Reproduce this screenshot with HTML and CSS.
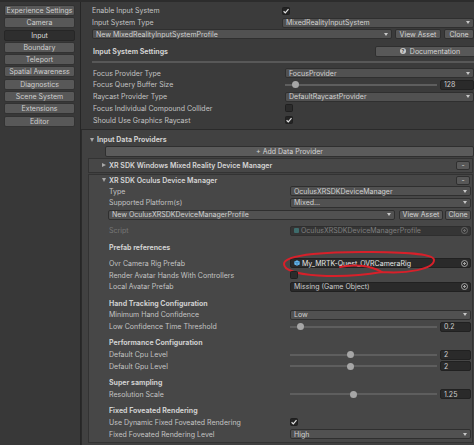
FILE: index.html
```html
<!DOCTYPE html>
<html>
    <head>
        <title>Mixed Reality Toolkit - Input</title>
        <link rel="stylesheet" href="styles.css">
    </head>
    <body>
        <div class="window">
            <div class="sidebar">
                <div class="nav-btn">Experience Settings</div>
                <div class="nav-btn">Camera</div>
                <div class="nav-btn active">Input</div>
                <div class="nav-btn">Boundary</div>
                <div class="nav-btn">Teleport</div>
                <div class="nav-btn">Spatial Awareness</div>
                <div class="nav-btn">Diagnostics</div>
                <div class="nav-btn">Scene System</div>
                <div class="nav-btn">Extensions</div>
                <div class="nav-btn">Editor</div>
            </div>

            <div class="inspector">
                <div class="row top">
                    <span class="label">Enable Input System</span>
                    <span class="value"><span class="check on"><svg viewBox="0 0 8 8"><path d="M1.6 4.3 L3.3 5.9 L6.5 2.1" /></svg></span></span>
                </div>
                <div class="row top">
                    <span class="label">Input System Type</span>
                    <span class="value"><span class="popup">MixedRealityInputSystem</span></span>
                </div>
                <div class="row top">
                    <span class="popup profile">New MixedRealityInputSystemProfile</span>
                    <span class="btn view">View Asset</span>
                    <span class="btn clone">Clone</span>
                </div>
                <div class="row top heading">
                    <span class="label bold">Input System Settings</span>
                    <span class="btn doc"><span class="help">?</span>Documentation</span>
                </div>
                <div class="rule"></div>

                <div class="row settings first">
                    <span class="label">Focus Provider Type</span>
                    <span class="value"><span class="popup">FocusProvider</span></span>
                </div>
                <div class="row settings">
                    <span class="label">Focus Query Buffer Size</span>
                    <span class="value">
                        <span class="slider"><span class="knob" style="left: 7%"></span></span>
                        <span class="field num wide">128</span>
                    </span>
                </div>
                <div class="row settings">
                    <span class="label">Raycast Provider Type</span>
                    <span class="value"><span class="popup">DefaultRaycastProvider</span></span>
                </div>
                <div class="row settings">
                    <span class="label">Focus Individual Compound Collider</span>
                    <span class="value"><span class="check"></span></span>
                </div>
                <div class="row settings">
                    <span class="label">Should Use Graphics Raycast</span>
                    <span class="value"><span class="check on"><svg viewBox="0 0 8 8"><path d="M1.6 4.3 L3.3 5.9 L6.5 2.1" /></svg></span></span>
                </div>

                <div class="providers">
                    <div class="fold-head bold"><span class="tri down"></span>Input Data Providers</div>
                    <div class="btn add">+ Add Data Provider</div>

                    <div class="box">
                        <div class="box-head"><span class="tri right"></span>XR SDK Windows Mixed Reality Device Manager<span class="btn minus">-</span></div>
                    </div>

                    <div class="box open">
                        <div class="box-head"><span class="tri down"></span>XR SDK Oculus Device Manager<span class="btn minus">-</span></div>

                        <div class="row inner">
                            <span class="label">Type</span>
                            <span class="value"><span class="popup">OculusXRSDKDeviceManager</span></span>
                        </div>
                        <div class="row inner">
                            <span class="label">Supported Platform(s)</span>
                            <span class="value"><span class="popup">Mixed...</span></span>
                        </div>
                        <div class="row inner">
                            <span class="popup profile">New OculusXRSDKDeviceManagerProfile</span>
                            <span class="btn view">View Asset</span>
                            <span class="btn clone">Clone</span>
                        </div>
                        <div class="row inner spaced dim">
                            <span class="label">Script</span>
                            <span class="value"><span class="field object disabled"><span class="script-icon"></span>OculusXRSDKDeviceManagerProfile<span class="picker"></span></span></span>
                        </div>

                        <div class="row inner spaced">
                            <span class="label bold">Prefab references</span>
                        </div>
                        <div class="row inner spaced">
                            <span class="label">Ovr Camera Rig Prefab</span>
                            <span class="value marked">
                                <span class="field object bright">
                                    <svg class="prefab" viewBox="0 0 6 6"><path d="M3 0.3 L5.7 1.6 V4.4 L3 5.7 L0.3 4.4 V1.6Z" fill="#67b8ee" /><path d="M0.3 1.6 L3 2.9 L5.7 1.6 M3 2.9 V5.7" stroke="#2b6d9e" stroke-width="0.6" fill="none" /></svg>My_MRTK-Quest_OVRCameraRig<span class="picker"></span>
                                </span>
                                <svg class="circled" viewBox="0 0 154 27">
                                    <path d="M58 16 C70 13 88 14 100 21" />
                                    <path d="M100 21 C60 28 2 26 2 13 C2 3 50 0.5 90 1 C130 1.5 152 3 152 9 C152 18 125 23 100 21" />
                                </svg>
                            </span>
                        </div>
                        <div class="row inner">
                            <span class="label">Render Avatar Hands With Controllers</span>
                            <span class="value"><span class="check"></span></span>
                        </div>
                        <div class="row inner">
                            <span class="label">Local Avatar Prefab</span>
                            <span class="value"><span class="field object">Missing (Game Object)<span class="picker"></span></span></span>
                        </div>

                        <div class="row inner spaced">
                            <span class="label bold">Hand Tracking Configuration</span>
                        </div>
                        <div class="row inner">
                            <span class="label">Minimum Hand Confidence</span>
                            <span class="value"><span class="popup">Low</span></span>
                        </div>
                        <div class="row inner">
                            <span class="label">Low Confidence Time Threshold</span>
                            <span class="value">
                                <span class="slider"><span class="knob" style="left: 7%"></span></span>
                                <span class="field num">0.2</span>
                            </span>
                        </div>

                        <div class="row inner spaced">
                            <span class="label bold">Performance Configuration</span>
                        </div>
                        <div class="row inner">
                            <span class="label">Default Cpu Level</span>
                            <span class="value">
                                <span class="slider"><span class="knob" style="left: 41%"></span></span>
                                <span class="field num">2</span>
                            </span>
                        </div>
                        <div class="row inner">
                            <span class="label">Default Gpu Level</span>
                            <span class="value">
                                <span class="slider"><span class="knob" style="left: 41%"></span></span>
                                <span class="field num">2</span>
                            </span>
                        </div>

                        <div class="row inner spaced">
                            <span class="label bold">Super sampling</span>
                        </div>
                        <div class="row inner">
                            <span class="label">Resolution Scale</span>
                            <span class="value">
                                <span class="slider"><span class="knob" style="left: 43%"></span></span>
                                <span class="field num">1.25</span>
                            </span>
                        </div>

                        <div class="row inner spaced">
                            <span class="label bold">Fixed Foveated Rendering</span>
                        </div>
                        <div class="row inner">
                            <span class="label">Use Dynamic Fixed Foveated Rendering</span>
                            <span class="value"><span class="check on"><svg viewBox="0 0 8 8"><path d="M1.6 4.3 L3.3 5.9 L6.5 2.1" /></svg></span></span>
                        </div>
                        <div class="row inner">
                            <span class="label">Fixed Foveated Rendering Level</span>
                            <span class="value"><span class="popup">High</span></span>
                        </div>
                    </div>
                </div>
            </div>
        </div>
    </body>
</html>
```

FILE: styles.css
```css
body {
    margin: 0px;
    background: #383838;
    font-family: Inter, "Liberation Sans", sans-serif;
    font-size: 7px;
    color: #c4c4c4;
}
.window {
    display: flex;
    width: 474px;
    height: 445px;
    overflow: hidden;
    border-top: 2px solid #2c2c2c;
    box-sizing: border-box;
}
.bold {
    font-weight: bold;
    color: #d0d0d0;
}

/* left tab list */
.sidebar {
    width: 76px;
    padding: 3px 0 0 4px;
    border-right: 1px solid #262626;
    display: flex;
    flex-direction: column;
    gap: 1.3px;
    flex: none;
}
.nav-btn {
    width: 71px;
    height: 11px;
    line-height: 10px;
    box-sizing: border-box;
    background: #585858;
    border: 1px solid #323232;
    border-radius: 2px;
    text-align: center;
    color: #cfcfcf;
    white-space: nowrap;
}
.nav-btn.active {
    background: #2e2e2e;
    border-color: #262626;
    color: #dcdcdc;
}

/* inspector */
.inspector {
    flex: 1;
    min-width: 0;
    display: flex;
    flex-direction: column;
    padding-top: 3px;
    background: #3b3b3b;
}
.row {
    display: flex;
    align-items: center;
    height: 11.75px;
    flex: none;
    white-space: nowrap;
}
.label {
    flex: none;
    overflow: hidden;
}
.value {
    flex: 1;
    min-width: 0;
    display: flex;
    align-items: center;
    position: relative;
}
.row.top {
    padding-left: 11px;
}
.row.top .label {
    width: 190px;
}
.row.heading {
    margin-top: 5px;
    height: 12px;
    padding-left: 12px;
}
.row.heading .label {
    width: 282px;
}
.rule {
    height: 2px;
    background: #585858;
    margin: 4px 0 0 11px;
    flex: none;
}
.row.settings {
    padding-left: 12px;
}
.row.settings .label {
    width: 192px;
}
.row.settings.first {
    margin-top: 4px;
}

/* controls */
.popup {
    flex: 1;
    min-width: 0;
    height: 10px;
    box-sizing: border-box;
    background: #515151;
    border: 1px solid #2f2f2f;
    border-radius: 2px;
    padding-left: 3px;
    display: flex;
    align-items: center;
    color: #d2d2d2;
}
.popup::after {
    content: "";
    margin-left: auto;
    margin-right: 3px;
    border-left: 2.5px solid transparent;
    border-right: 2.5px solid transparent;
    border-top: 3px solid #c8c8c8;
}
.btn {
    height: 10px;
    box-sizing: border-box;
    background: #585858;
    border: 1px solid #2f2f2f;
    border-radius: 2px;
    display: flex;
    align-items: center;
    justify-content: center;
    color: #d4d4d4;
    flex: none;
}
.row.top .view {
    width: 46px;
    margin-left: 3px;
}
.row.top .clone {
    width: 30px;
    margin-left: 3px;
}
.doc {
    width: 110px;
    height: 11px;
}
.help {
    width: 6px;
    height: 6px;
    line-height: 6px;
    border-radius: 50%;
    background: #c8c8c8;
    color: #3a3a3a;
    font-size: 5px;
    font-weight: bold;
    text-align: center;
    margin-right: 4px;
}
.field {
    height: 10px;
    box-sizing: border-box;
    background: #2a2a2a;
    border: 1px solid #212121;
    border-radius: 2px;
    padding-left: 3px;
    display: flex;
    align-items: center;
    color: #cdcdcd;
}
.field.object {
    flex: 1;
    min-width: 0;
}
.field.bright {
    color: #e6e6e6;
}
.field.disabled {
    background: #353535;
    border-color: #2e2e2e;
    color: #7e7e7e;
}
.picker {
    width: 7px;
    height: 7px;
    box-sizing: border-box;
    margin-left: auto;
    margin-right: 2px;
    border: 1px solid #a2a2a2;
    border-radius: 50%;
    background: radial-gradient(circle, #a2a2a2 1px, transparent 1.3px);
}
.disabled .picker {
    border-color: #6a6a6a;
    background: radial-gradient(circle, #6a6a6a 1px, transparent 1.3px);
}
.script-icon {
    width: 5px;
    height: 5px;
    background: #3e6c6c;
    margin-right: 2px;
    border-radius: 1px;
}
.prefab {
    width: 6px;
    height: 6px;
    margin-right: 2px;
}
.check {
    width: 8px;
    height: 8px;
    box-sizing: border-box;
    background: #2b2b2b;
    border: 1px solid #1f1f1f;
    border-radius: 1.5px;
    display: flex;
}
.check.on {
    background: #232323;
}
.check svg {
    width: 8px;
    height: 8px;
    margin: -1px;
}
.check path {
    stroke: #e0e0e0;
    stroke-width: 1.2;
    fill: none;
}
.slider {
    flex: 1;
    height: 10px;
    position: relative;
    margin-right: 3px;
}
.slider::before {
    content: "";
    position: absolute;
    left: 0;
    right: 0;
    top: 4px;
    height: 2px;
    background: #5e5e5e;
}
.knob {
    position: absolute;
    top: 1.5px;
    width: 7px;
    height: 7px;
    margin-left: -3.5px;
    border-radius: 50%;
    background: #a6a6a6;
}
.num {
    width: 31px;
    flex: none;
}
.num.wide {
    width: 34px;
}

/* data providers */
.providers {
    flex: 1;
    margin-top: 3px;
    border-top: 1px solid #2a2a2a;
    border-left: 1px solid #2b2b2b;
    background: #414141;
}
.fold-head {
    height: 11.75px;
    margin-top: 4px;
    padding-left: 8px;
    display: flex;
    align-items: center;
}
.tri {
    width: 0;
    height: 0;
    margin-right: 2px;
}
.tri.down {
    border-left: 2.5px solid transparent;
    border-right: 2.5px solid transparent;
    border-top: 4px solid #a8a8a8;
    margin-right: 3px;
}
.tri.right {
    border-top: 2.5px solid transparent;
    border-bottom: 2.5px solid transparent;
    border-left: 4px solid #a8a8a8;
    margin-right: 3px;
}
.add {
    margin-left: 23px;
    height: 11px;
    background: #5b5b5b;
}
.box {
    margin: 1px 1px 0 6px;
    border: 1px solid #333333;
    background: #474747;
}
.box-head {
    height: 13px;
    padding-left: 13px;
    display: flex;
    align-items: center;
    font-weight: 600;
    color: #d6d6d6;
}
.box.open .box-head {
    height: 10.5px;
}
.minus {
    margin-left: auto;
    margin-right: 2px;
    width: 14px;
    height: 9px;
    font-weight: normal;
}
.box.open {
    padding-bottom: 2px;
}
.row.inner {
    padding-left: 20px;
    padding-right: 1px;
}
.row.inner .label {
    width: 181px;
}
.row.inner .view {
    width: 44px;
    margin-left: 4px;
}
.row.inner .clone {
    width: 26px;
    margin-left: 2px;
}
.row.inner .popup.profile {
    margin-left: -1px;
}
.row.spaced {
    margin-top: 4.5px;
}
.row.dim .label {
    color: #777777;
}
.circled {
    position: absolute;
    left: -8px;
    top: -7px;
    width: 154px;
    height: 27px;
    overflow: visible;
}
.circled path {
    fill: none;
    stroke: #d8202a;
    stroke-width: 2;
    stroke-linecap: round;
}
```
